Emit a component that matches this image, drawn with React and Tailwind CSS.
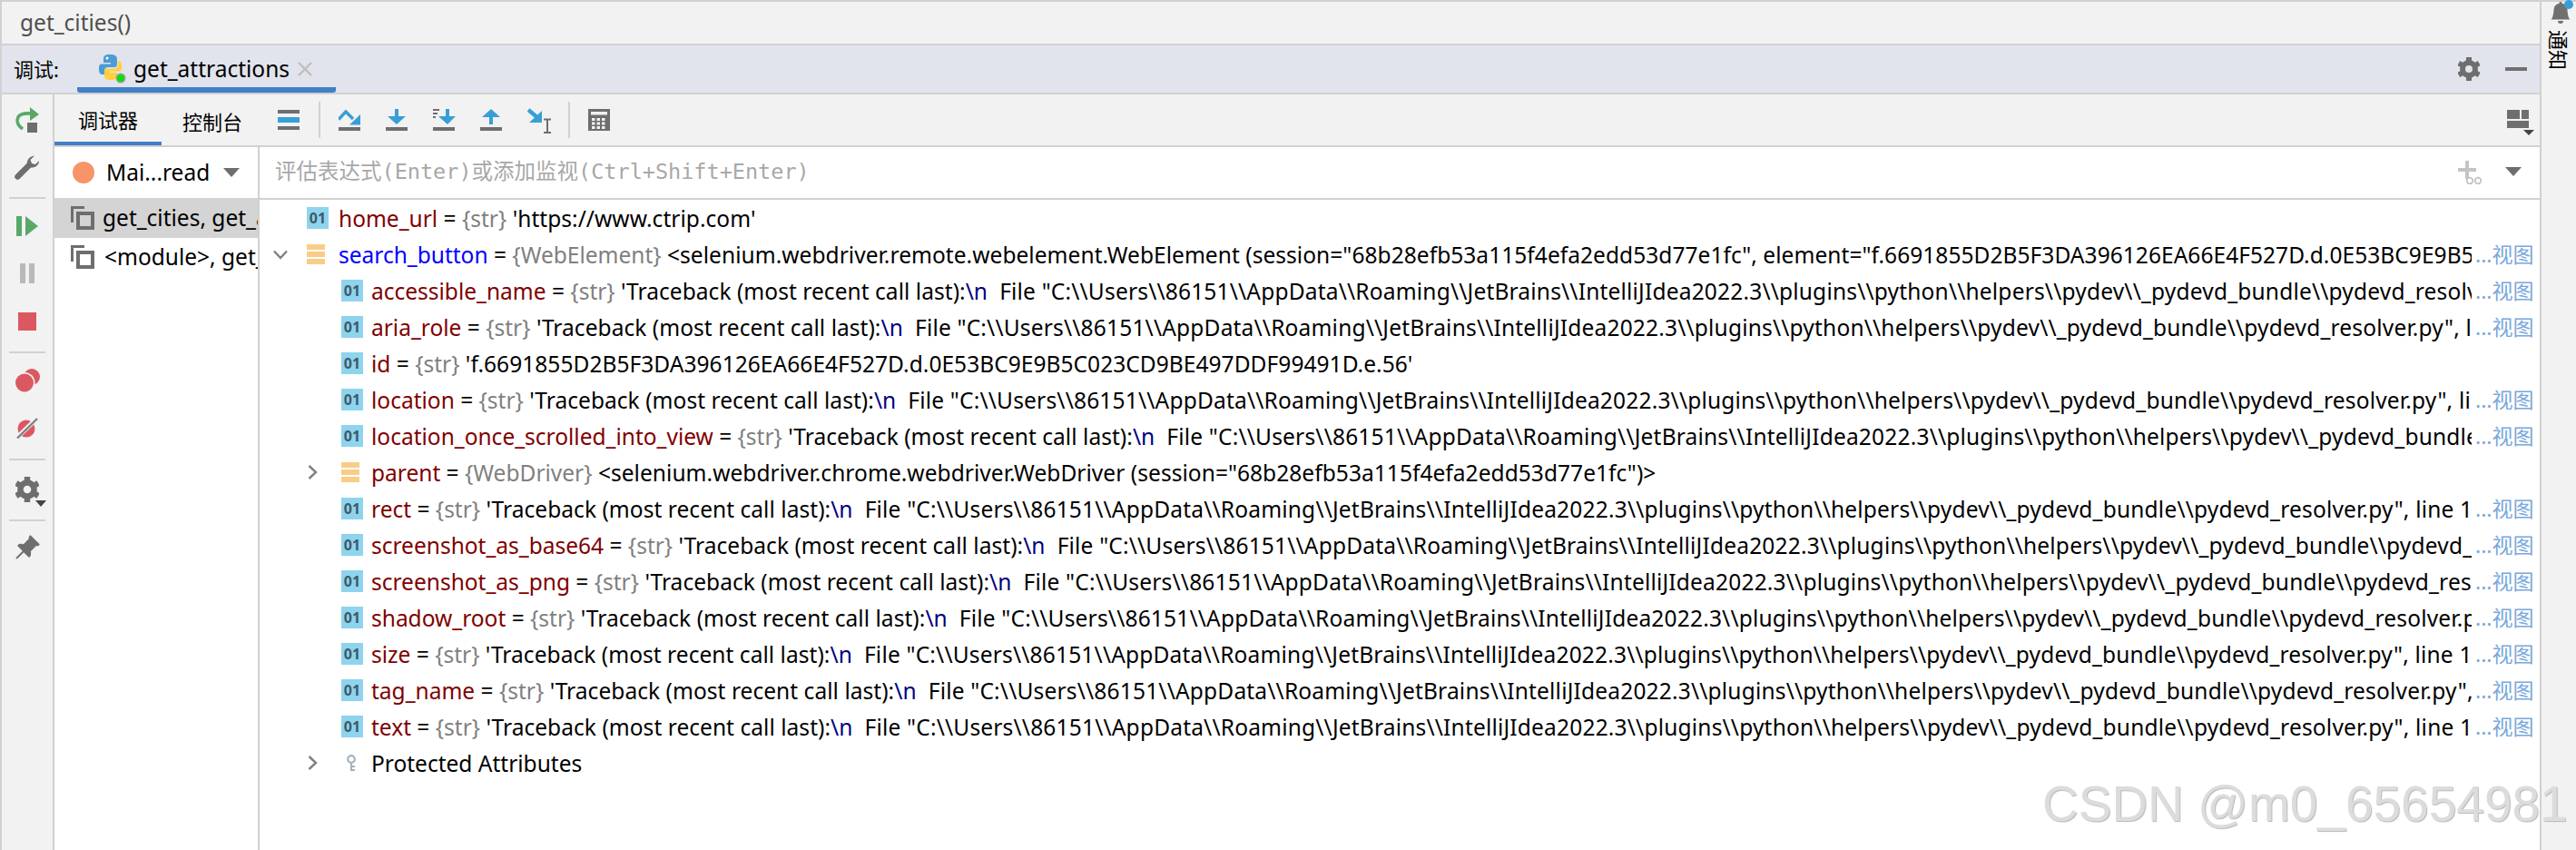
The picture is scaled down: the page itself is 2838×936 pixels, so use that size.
import React from "react";
import { BsBellFill, BsPinAngleFill } from "react-icons/bs";

const TB = `'Traceback (most recent call last):`;
const TB2 = `  File "C:\\\\Users\\\\86151\\\\AppData\\\\Roaming\\\\JetBrains\\\\IntelliJIdea2022.3\\\\plugins\\\\python\\\\helpers\\\\pydev\\\\_pydevd_bundle\\\\pydevd_resolver.py", line 1755, in _get_py_dictionary`;

const rows = [
  { name: "accessible_name" },
  { name: "aria_role" },
  { name: "id", id: true },
  { name: "location" },
  { name: "location_once_scrolled_into_view" },
  { name: "parent", parent: true },
  { name: "rect" },
  { name: "screenshot_as_base64" },
  { name: "screenshot_as_png" },
  { name: "shadow_root" },
  { name: "size" },
  { name: "tag_name" },
  { name: "text" },
];

const G = "#6e6e6e";
const B = "#389fd6";

function StrIcon() {
  return (
    <span className="w-[24px] h-[24px] bg-[#8ed4ee] flex items-center justify-center shrink-0 text-[16px] font-bold leading-none text-[#3f5a68]">
      01
    </span>
  );
}

function ListIcon() {
  return (
    <svg width="20" height="22" viewBox="0 0 20 22" className="shrink-0">
      <rect x="0" y="0" width="20" height="6" fill="#f9cd88" />
      <rect x="0" y="8" width="20" height="6" fill="#f9cd88" />
      <rect x="0" y="16" width="20" height="6" fill="#f9cd88" />
    </svg>
  );
}

function ChevronDown() {
  return (
    <svg width="16" height="11" viewBox="0 0 16 11" className="shrink-0">
      <path d="M1 1.5 L8 9 L15 1.5" fill="none" stroke="#808080" strokeWidth="2.4" />
    </svg>
  );
}

function ChevronRight() {
  return (
    <svg width="11" height="16" viewBox="0 0 11 16" className="shrink-0">
      <path d="M1.5 1 L9 8 L1.5 15" fill="none" stroke="#808080" strokeWidth="2.4" />
    </svg>
  );
}

function Gear({ size = 24 }) {
  return (
    <svg width={size} height={size + 2} viewBox="0 0 24 26" className="shrink-0">
      <circle cx="12" cy="13" r="7" fill="none" stroke={G} strokeWidth="6" />
      {[0, 60, 120, 180, 240, 300].map((a) => (
        <rect key={a} x="9" y="0" width="6" height="6" fill={G} transform={`rotate(${a} 12 13)`} />
      ))}
    </svg>
  );
}

function Caret({ w = 18, h = 10, color = G }) {
  return (
    <svg width={w} height={h} viewBox="0 0 18 10" preserveAspectRatio="none" className="shrink-0">
      <polygon points="0,0 18,0 9,10" fill={color} />
    </svg>
  );
}

function Python() {
  return (
    <svg width="30" height="32" viewBox="0 0 30 32" className="shrink-0">
      <path d="M12 0 C6 0 5 2 5 5 V9 H13 V10.500 H3 C0 10.500 0 13 0 16 C0 20 1 22 4 22 H6 V18 C6 15.500 8 14 10 14 H17 C19 14 20 13 20 11 V5 C20 2 18 0 12 0 Z" fill="#4b9cd3" />
      <circle cx="9" cy="4" r="1.500" fill="#fff" />
      <path d="M13 28 C19 28 20 26 20 23 V20 H12 V18.500 H22 C25 18.500 25 16 25 13 C25 9 24 7 21 7 H21 V11 C21 14 19 15.500 17 15.500 H9 C7 15.500 6 16.500 6 18 V23 C6 26 8 28 13 28 Z" fill="#ffcf3f" />
      <circle cx="24" cy="26" r="5.500" fill="#9aa0a0" />
      <circle cx="24" cy="26" r="4" fill="#0adf0a" />
    </svg>
  );
}

function Restart() {
  return (
    <svg width="28" height="28" viewBox="0 0 28 28">
      <path d="M9 24 C3 20 2 15 4 11 C6 7.500 11 6.500 18 7" fill="none" stroke="#59a869" strokeWidth="3.600" />
      <polygon points="17,0 27,8 17,15" fill="#59a869" />
      <rect x="14" y="17" width="11" height="11" fill={G} />
    </svg>
  );
}

function Wrench() {
  return (
    <svg width="28" height="27" viewBox="0 0 28 27">
      <path d="M3.500 23.500 L16 11" stroke={G} strokeWidth="6.500" strokeLinecap="round" />
      <path d="M27 6 C27 12 21 15 15 13 C12 8 15 1 22 0.500 L17.500 5 L19 9 L23 10 Z" fill={G} />
    </svg>
  );
}

function Resume() {
  return (
    <svg width="24" height="22" viewBox="0 0 24 22">
      <rect x="0" y="0" width="6" height="22" fill="#59a869" />
      <polygon points="10,0 24,11 10,22" fill="#59a869" />
    </svg>
  );
}

function Pause() {
  return (
    <svg width="16" height="22" viewBox="0 0 16 22">
      <rect x="0" y="0" width="6" height="22" fill="#b9b9b9" />
      <rect x="10" y="0" width="6" height="22" fill="#b9b9b9" />
    </svg>
  );
}

function Breakpoints() {
  return (
    <svg width="27" height="26" viewBox="0 0 27 26">
      <circle cx="18" cy="9" r="9" fill="#db5860" />
      <circle cx="10" cy="15.500" r="11.500" fill="#f2f2f2" />
      <circle cx="10" cy="15.500" r="10" fill="#db5860" />
    </svg>
  );
}

function Mute() {
  return (
    <svg width="24" height="23" viewBox="0 0 24 23">
      <ellipse cx="11" cy="12" rx="9.500" ry="9.500" fill="#db5860" />
      <path d="M0.500 22 L23 0.500" stroke="#f2f2f2" strokeWidth="5" />
      <path d="M1 22.500 L23 1" stroke="#808080" strokeWidth="2.400" />
    </svg>
  );
}

function FrameIcon() {
  return (
    <svg width="26" height="26" viewBox="0 0 26 26" className="shrink-0">
      <path d="M0 18 V0 H15 V3 H3 V18 Z" fill={G} />
      <path fillRule="evenodd" d="M6 6 H26 V26 H6 Z M10 10 V22 H22 V10 Z" fill={G} />
    </svg>
  );
}

function Threads() {
  return (
    <svg width="24" height="22" viewBox="0 0 24 22">
      <rect x="0" y="0" width="24" height="4" fill={G} />
      <rect x="0" y="8" width="24" height="6" fill={B} />
      <rect x="0" y="18" width="24" height="4" fill={G} />
    </svg>
  );
}

function StepOver() {
  return (
    <svg width="24" height="24" viewBox="0 0 24 24">
      <rect x="0" y="20" width="24" height="4" fill={G} />
      <path d="M0 11.500 L8 3 L16 11" fill="none" stroke={B} strokeWidth="3.400" />
      <polygon points="24,6 24,17.500 12,17.500" fill={B} />
    </svg>
  );
}

function StepInto() {
  return (
    <svg width="24" height="24" viewBox="0 0 24 24">
      <rect x="0" y="20" width="24" height="4" fill={G} />
      <rect x="10" y="0" width="4" height="9" fill={B} />
      <polygon points="2,8 22,8 12,17" fill={B} />
    </svg>
  );
}

function MyCode() {
  return (
    <svg width="25" height="24" viewBox="0 0 25 24">
      <rect x="0" y="20" width="24" height="4" fill={G} />
      <rect x="0" y="0" width="7" height="2" fill={G} />
      <rect x="0" y="4" width="5" height="2" fill={G} />
      <rect x="0" y="8" width="3" height="2" fill={G} />
      <rect x="14" y="0" width="4" height="9" fill={B} />
      <polygon points="6,8 25,8 16,17" fill={B} />
    </svg>
  );
}

function StepOut() {
  return (
    <svg width="24" height="24" viewBox="0 0 24 24">
      <rect x="0" y="20" width="24" height="4" fill={G} />
      <rect x="10" y="8" width="4" height="9" fill={B} />
      <polygon points="2,9 22,9 12,0" fill={B} />
    </svg>
  );
}

function Cursor() {
  return (
    <svg width="27" height="28" viewBox="0 0 27 28">
      <path d="M1 2 L13 12" stroke={B} strokeWidth="4.500" />
      <polygon points="16,3 16,16 2,16" fill={B} />
      <path d="M18 12.500 H26 M18 27 H26 M22 12.500 V27" stroke={G} strokeWidth="2" fill="none" />
    </svg>
  );
}

function Calc() {
  const cells = [];
  [10, 14.500, 19].forEach((y) =>
    [4, 9.500, 15].forEach((x) =>
      cells.push(<rect key={`${x}-${y}`} x={x} y={y} width="3.500" height="3" fill="#f2f2f2" />)
    )
  );
  return (
    <svg width="24" height="24" viewBox="0 0 24 24">
      <rect x="0" y="0" width="24" height="24" fill={G} />
      <rect x="3" y="3" width="18" height="3.500" fill="#f2f2f2" />
      {cells}
    </svg>
  );
}

function LayoutIcon() {
  return (
    <svg width="30" height="28" viewBox="0 0 30 28">
      <rect x="0" y="0" width="14" height="10" fill={G} />
      <rect x="16" y="0" width="8" height="10" fill={G} />
      <rect x="0" y="12" width="24" height="8" fill={G} />
      <polygon points="18,22 30,22 24,28" fill="#444" />
    </svg>
  );
}

function AddWatch() {
  return (
    <svg width="26" height="26" viewBox="0 0 26 26">
      <rect x="8" y="0" width="4" height="20" fill="#c4c4c4" />
      <rect x="0" y="8" width="20" height="4" fill="#c4c4c4" />
      <circle cx="13" cy="22" r="3.300" fill="#fff" stroke="#c4c4c4" strokeWidth="1.800" />
      <circle cx="22" cy="22" r="3.300" fill="#fff" stroke="#c4c4c4" strokeWidth="1.800" />
    </svg>
  );
}

function Key() {
  return (
    <svg width="12" height="18" viewBox="0 0 12 18" className="shrink-0">
      <circle cx="6" cy="5" r="3.800" fill="none" stroke="#a8b2ba" strokeWidth="2.200" />
      <path d="M6 9 V18 M6 13 H10 M6 17 H10" stroke="#a8b2ba" strokeWidth="2.200" fill="none" />
    </svg>
  );
}

function ToolSep() {
  return <div className="w-[2px] h-[40px] bg-[#d1d1d1] shrink-0" />;
}

function RailSep({ className }) {
  return <div className={`h-[2px] w-[40px] bg-[#d1d1d1] ${className}`} />;
}

function Link() {
  return (
    <span className="shrink-0 w-[75px] pl-[4px] text-[23px] text-[#7aa8dc] whitespace-nowrap">...视图</span>
  );
}

function Var({ indent, icon, chevron, name, nameClass = "text-[#800000]", type, children, link = true }) {
  return (
    <div className="h-[40px] flex items-center whitespace-nowrap shrink-0">
      <div className={indent ? "w-[88px] pl-[53px] flex items-center shrink-0" : "w-[52px] pl-[15px] flex items-center shrink-0"}>
        {chevron}
      </div>
      <div className={indent ? "w-[35px] flex items-center shrink-0 pl-[2px]" : "w-[35px] flex items-center shrink-0"}>
        {icon}
      </div>
      <div className="flex-1 min-w-0 self-stretch overflow-hidden pt-[2px] leading-[38px]">
        <span className={nameClass}>{name}</span>
        <span className="text-black"> = </span>
        {type && <span className="text-[#808080]">{`{${type}} `}</span>}
        <span className="text-black tracking-[0.05px]">{children}</span>
      </div>
      {link && <Link />}
    </div>
  );
}

function TracebackValue() {
  return (
    <>
      {TB}
      <span className="text-[#000080]">\n</span>
      <span className="whitespace-pre tracking-[0.19px]">{TB2}</span>
    </>
  );
}

export default function App() {
  return (
    <div className="relative w-[2838px] h-[936px] flex overflow-hidden bg-white text-[24.5px] leading-none font-['Noto_Sans','Noto_Sans_CJK_SC',sans-serif] text-black">
      <div className="w-[2798px] shrink-0 flex flex-col border-l-[2px] border-[#d1d1d1]">
        <div className="h-[50px] shrink-0 bg-[#f2f2f2] border-t-[2px] border-b-[2px] border-[#d1d1d1] flex items-center pl-[20px] text-[#505050]">
          get_cities()
        </div>

        <div className="h-[54px] shrink-0 bg-[#e1e4ec] border-b-[2px] border-[#d1d1d1] flex items-center relative">
          <span className="ml-[13px] w-[67px] text-[22px]">调试:</span>
          <div className="h-[52px] ml-[3px] w-[285px] flex items-center pl-[24px] border-b-[6px] border-[#4080c8] rounded-b-[3px] pt-[6px]">
            <Python />
            <span className="ml-[8px]">get_attractions</span>
            <svg width="16" height="16" viewBox="0 0 16 16" className="ml-[9px] shrink-0">
              <path d="M1 1 L15 15 M15 1 L1 15" stroke="#bdbdbd" strokeWidth="2.200" />
            </svg>
          </div>
          <div className="ml-auto flex items-center pr-[14px]">
            <Gear size={24} />
            <div className="w-[24px] h-[4px] bg-[#707070] ml-[28px]" />
          </div>
        </div>

        <div className="flex-1 min-h-0 flex">
          <div className="w-[58px] shrink-0 bg-[#f2f2f2] border-r-[2px] border-[#d1d1d1] flex flex-col items-center">
            <div className="mt-[14px]"><Restart /></div>
            <div className="mt-[25px]"><Wrench /></div>
            <RailSep className="mt-[19px]" />
            <div className="mt-[19px]"><Resume /></div>
            <div className="mt-[30px]"><Pause /></div>
            <div className="mt-[32px] w-[20px] h-[20px] bg-[#db5860]" />
            <RailSep className="mt-[23px]" />
            <div className="mt-[17px]"><Breakpoints /></div>
            <div className="mt-[28px]"><Mute /></div>
            <RailSep className="mt-[22px]" />
            <div className="mt-[18px] relative">
              <Gear size={26} />
              <div className="absolute right-[-8px] bottom-[-5px]"><Caret w={12} h={7} color="#444" /></div>
            </div>
            <RailSep className="mt-[19px]" />
            <div className="mt-[14px]"><BsPinAngleFill size={30} color={G} /></div>
          </div>

          <div className="flex-1 min-w-0 flex flex-col">
            <div className="h-[58px] shrink-0 bg-[#f2f2f2] border-b-[2px] border-[#d1d1d1] flex items-center relative text-[22px]">
              <div className="w-[118px] h-[56px] flex items-center justify-center border-b-[4px] border-[#4080c8] pt-[4px] shrink-0">调试器</div>
              <div className="w-[112px] h-[56px] flex items-center justify-center pt-[4px] shrink-0">控制台</div>
              <div className="ml-[16px]"><Threads /></div>
              <div className="ml-[21px]"><ToolSep /></div>
              <div className="ml-[20px]"><StepOver /></div>
              <div className="ml-[28px]"><StepInto /></div>
              <div className="ml-[28px]"><MyCode /></div>
              <div className="ml-[27px]"><StepOut /></div>
              <div className="ml-[28px] mt-[2px]"><Cursor /></div>
              <div className="ml-[18px]"><ToolSep /></div>
              <div className="ml-[20px]"><Calc /></div>
              <div className="ml-auto pr-[6px] pt-[5px]"><LayoutIcon /></div>
            </div>

            <div className="flex-1 min-h-0 flex">
              <div className="w-[226px] shrink-0 flex flex-col border-r-[2px] border-[#d1d1d1]">
                <div className="h-[56px] shrink-0 flex items-center pl-[20px]">
                  <span className="w-[24px] h-[24px] rounded-full bg-[#f79468] shrink-0" />
                  <span className="ml-[13px] w-[129px]">Mai...read</span>
                  <Caret />
                </div>
                <div className="h-[44px] shrink-0 bg-[#d4d4d4] flex items-center pl-[18px] overflow-hidden whitespace-nowrap leading-[44px]">
                  <FrameIcon />
                  <span className="ml-[9px]">get_cities, get_attractions.py:26</span>
                </div>
                <div className="h-[42px] shrink-0 flex items-center pl-[18px] overflow-hidden whitespace-nowrap leading-[42px]">
                  <FrameIcon />
                  <span className="ml-[11px]">&lt;module&gt;, get_attractions.py:62</span>
                </div>
              </div>

              <div className="flex-1 min-w-0 flex flex-col">
                <div className="h-[58px] shrink-0 border-b-[2px] border-[#d1d1d1] flex items-center pl-[17px]">
                  <span className="text-[23.5px] text-[#a8a8a8] whitespace-pre font-['DejaVu_Sans_Mono','Noto_Sans_CJK_SC',monospace]">评估表达式(Enter)或添加监视(Ctrl+Shift+Enter)</span>
                  <div className="ml-auto pr-[64px]"><AddWatch /></div>
                  <div className="pr-[20px] pb-[2px] ml-[-38px]"><Caret /></div>
                </div>

                <div className="flex-1 min-h-0 flex flex-col">
                  <Var indent={false} icon={<StrIcon />} name="home_url" type="str" link={false}>'https://www.ctrip.com'</Var>
                  <Var
                    indent={false}
                    icon={<ListIcon />}
                    chevron={<ChevronDown />}
                    name="search_button"
                    nameClass="text-[#0000ff]"
                    type="WebElement"
                  >
                    {`<selenium.webdriver.remote.webelement.WebElement (session="68b28efb53a115f4efa2edd53d77e1fc", element="f.6691855D2B5F3DA396126EA66E4F527D.d.0E53BC9E9B5C023CD9BE497DDF99491D.e.56")>`}
                  </Var>
                  {rows.map((r) => (
                    <Var
                      key={r.name}
                      indent
                      icon={r.parent ? <ListIcon /> : <StrIcon />}
                      chevron={r.parent ? <ChevronRight /> : null}
                      name={r.name}
                      type={r.parent ? "WebDriver" : "str"}
                      link={!r.id && !r.parent}
                    >
                      {r.id
                        ? `'f.6691855D2B5F3DA396126EA66E4F527D.d.0E53BC9E9B5C023CD9BE497DDF99491D.e.56'`
                        : r.parent
                        ? `<selenium.webdriver.chrome.webdriver.WebDriver (session="68b28efb53a115f4efa2edd53d77e1fc")>`
                        : <TracebackValue />}
                    </Var>
                  ))}
                  <div className="h-[40px] flex items-center whitespace-nowrap shrink-0">
                    <div className="w-[88px] pl-[53px] flex items-center shrink-0"><ChevronRight /></div>
                    <div className="w-[35px] pl-[7px] flex items-center shrink-0"><Key /></div>
                    <span className="pt-[2px] leading-[38px]">Protected Attributes</span>
                  </div>
                </div>
              </div>
            </div>
          </div>
        </div>
      </div>

      <div className="w-[40px] shrink-0 bg-[#f2f2f2] border-l-[2px] border-[#d1d1d1] border-t-[2px] flex flex-col items-center">
        <div className="relative mt-[0px] ml-[4px]">
          <BsBellFill size={24} color="#707070" />
          <span className="absolute right-[-2px] top-[-2px] w-[10px] h-[10px] rounded-full bg-[#389fd6]" />
        </div>
        <span className="mt-[7px] text-[22px] [writing-mode:vertical-rl] [text-orientation:sideways] leading-none">通知</span>
      </div>

      <div className="absolute left-[2250px] top-[858px] text-[55px] leading-none whitespace-nowrap font-['Liberation_Sans',sans-serif] text-[#dcdcdc] [text-shadow:1px_1px_1px_#b8b8b8]">
        CSDN @m0_65654981
      </div>
    </div>
  );
}
